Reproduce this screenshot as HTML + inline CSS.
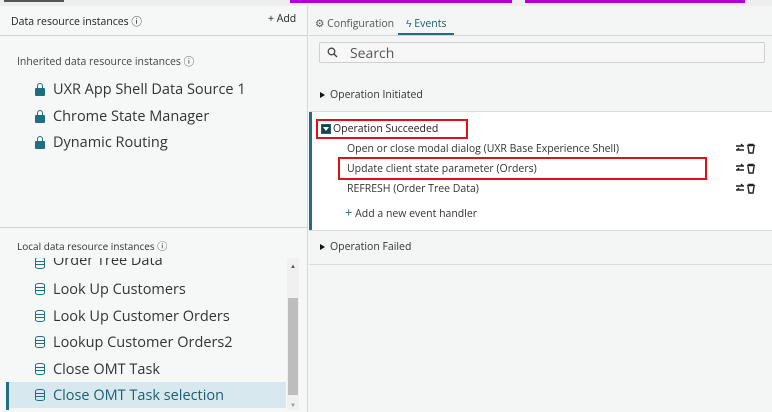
<!DOCTYPE html>
<html><head><style>
*{margin:0;padding:0;box-sizing:border-box}
body{width:772px;height:412px;overflow:hidden;background:#f4f5f5;font-family:"Open Sans","Liberation Sans",sans-serif;color:#2e2e2e;position:relative}
.a{position:absolute;white-space:nowrap}
.lock{position:absolute;width:10px;height:8px;background:#1f6f80;border-radius:1px}
.lock:before{content:"";position:absolute;left:2px;top:-5px;width:6px;height:6px;border:1.6px solid #1f6f80;border-bottom:none;border-radius:4px 4px 0 0;box-sizing:border-box}
.db{position:absolute;width:10px;height:12px;border:1.4px solid #1f6f80;border-radius:4px/2px}
.db:before,.db:after{content:"";position:absolute;left:0;right:0;height:0;border-top:1.2px solid #1f6f80}
.db:before{top:3px}.db:after{top:6px}
.big{font-size:14.5px;color:#333}
.sm{font-size:10.5px;color:#333}
.tri{display:inline-block;width:0;height:0;border-left:5px solid #111;border-top:3.5px solid transparent;border-bottom:3.5px solid transparent;margin-right:5px;vertical-align:0}
</style></head><body>
<svg width="0" height="0" style="position:absolute"><defs>
<g id="acts" fill="none" stroke="#222" stroke-width="1.4">
<path d="M1 3h8M6 1l2 2M1 7h8M4 5l-2 2" />
<path d="M12 2.5h8M14 2.5v-1h4v1M13 3.5l1 6.5h4l1-6.5"/>
</g></defs></svg>
<div class="a" style="left:0;top:0;width:772px;height:6px;background:#eee"></div>
<div class="a" style="left:290px;top:0;width:222px;height:3px;background:#b000d8"></div>
<div class="a" style="left:525px;top:0;width:220px;height:3px;background:#b000d8"></div>
<div class="a" style="left:4px;top:0;width:60px;height:2px;background:#555"></div>
<div class="a" style="left:0;top:6px;width:308px;height:406px;background:#f6f7f7;border-right:1px solid #d8d8d8"></div>
<div class="a" style="left:0;top:35px;width:308px;height:1px;background:#d2d2d2"></div>
<div class="a sm" style="left:11px;top:14px;color:#222">Data resource instances ⓘ</div>
<div class="a sm" style="left:268px;top:12px;color:#222">+ Add</div>
<div class="a" style="left:17px;top:54px;font-size:10.5px;color:#444">Inherited data resource instances ⓘ</div>
<div class="lock" style="left:35px;top:88px"></div><div class="a big" style="left:53px;top:80px">UXR App Shell Data Source 1</div>
<div class="lock" style="left:35px;top:115px"></div><div class="a big" style="left:53px;top:107px">Chrome State Manager</div>
<div class="lock" style="left:35px;top:141px"></div><div class="a big" style="left:53px;top:133px">Dynamic Routing</div>
<div class="a" style="left:0;top:227px;width:308px;height:1px;background:#d2d2d2"></div>
<div class="a" style="left:17px;top:238px;font-size:10px;color:#333">Local data resource instances ⓘ</div>
<div class="a" style="left:0;top:258px;width:300px;height:152px;overflow:hidden">
 <div class="a" style="left:6px;top:124px;width:280px;height:26px;background:#d7e8ee"></div>
 <div class="a" style="left:6px;top:124px;width:3px;height:28px;background:#1f6f80"></div>
 <div class="db" style="left:35px;top:-1px"></div><div class="a big" style="left:53px;top:-7px">Order Tree Data</div>
 <div class="db" style="left:35px;top:25px"></div><div class="a big" style="left:53px;top:22px">Look Up Customers</div>
 <div class="db" style="left:35px;top:52px"></div><div class="a big" style="left:53px;top:49px">Look Up Customer Orders</div>
 <div class="db" style="left:35px;top:78px"></div><div class="a big" style="left:53px;top:75px">Lookup Customer Orders2</div>
 <div class="db" style="left:35px;top:105px"></div><div class="a big" style="left:53px;top:102px">Close OMT Task</div>
 <div class="db" style="left:35px;top:131px"></div><div class="a big" style="left:53px;top:128px;color:#1d5f70">Close OMT Task selection</div>
</div>
<div class="a" style="left:287px;top:258px;width:12px;height:152px;background:#f0f0f0"></div>
<div class="a" style="left:288px;top:298px;width:10px;height:97px;background:#bdbdbd"></div>
<div class="a" style="left:290px;top:262px;font-size:6px;color:#555">▲</div>
<div class="a" style="left:290px;top:401px;font-size:6px;color:#999">▼</div>
<div class="a" style="left:309px;top:6px;width:463px;height:406px;background:#f4f5f5"></div>
<div class="a" style="left:309px;top:35px;width:463px;height:1px;background:#d6d6d6"></div>
<div class="a" style="left:315px;top:17px;font-size:10.5px;color:#555">⚙ Configuration</div>
<div class="a" style="left:406px;top:17px;font-size:10.5px;color:#1d5f70"><span style="color:#1f6f80">ϟ</span> Events</div>
<div class="a" style="left:398px;top:33px;width:56px;height:2px;background:#1f6f80"></div>
<div class="a" style="left:319px;top:42px;width:446px;height:21px;border:1px solid #cfcfcf;border-radius:2px;background:#f7f7f7"></div>
<svg class="a" style="left:327px;top:47px" width="11" height="11"><circle cx="4.5" cy="4.5" r="3.3" fill="none" stroke="#444" stroke-width="1.3"/><path d="M7 7l3 3" stroke="#444" stroke-width="1.4"/></svg>
<div class="a" style="left:350px;top:44px;font-size:14px;color:#555">Search</div>
<div class="a" style="left:309px;top:111px;width:463px;height:1px;background:#dcdcdc"></div>
<div class="a sm" style="left:320px;top:88px"><span class="tri"></span>Operation Initiated</div>
<div class="a" style="left:309px;top:112px;width:463px;height:118px;background:#fff"></div>
<div class="a" style="left:309px;top:112px;width:3px;height:118px;background:#1f6f80"></div>
<div class="a" style="left:309px;top:230px;width:463px;height:1px;background:#dcdcdc"></div>
<div class="a" style="left:316px;top:119px;width:152px;height:20px;border:2px solid #e0101a"></div>
<div class="a" style="left:321px;top:124px;width:10px;height:10px;border:1px solid #1d5f70;background:#fff"></div>
<div class="a" style="left:322px;top:125px;width:8px;height:8px;background:#1d3f50"></div>
<div class="a" style="left:323px;top:127px;width:0;height:0;border-top:4px solid #fff;border-left:3px solid transparent;border-right:3px solid transparent"></div>
<div class="a" style="left:333px;top:122px;font-size:10.5px;color:#222">Operation Succeeded</div>
<div class="a sm" style="left:347px;top:142px">Open or close modal dialog (UXR Base Experience Shell)</div>
<div class="a" style="left:338px;top:157px;width:369px;height:23px;border:2px solid #e0101a"></div>
<div class="a sm" style="left:347px;top:162px">Update client state parameter (Orders)</div>
<div class="a sm" style="left:347px;top:182px">REFRESH (Order Tree Data)</div>
<div class="a sm" style="left:345px;top:203px"><span style="color:#1f6f80;font-size:13px">+</span> Add a new event handler</div>
<svg class="a" style="left:735px;top:143px" width="22" height="12"><use href="#acts"/></svg>
<svg class="a" style="left:735px;top:163px" width="22" height="12"><use href="#acts"/></svg>
<svg class="a" style="left:735px;top:183px" width="22" height="12"><use href="#acts"/></svg>
<div class="a sm" style="left:320px;top:240px"><span class="tri"></span>Operation Failed</div>
<div class="a" style="left:309px;top:264px;width:463px;height:1px;background:#dcdcdc"></div>
</body></html>
